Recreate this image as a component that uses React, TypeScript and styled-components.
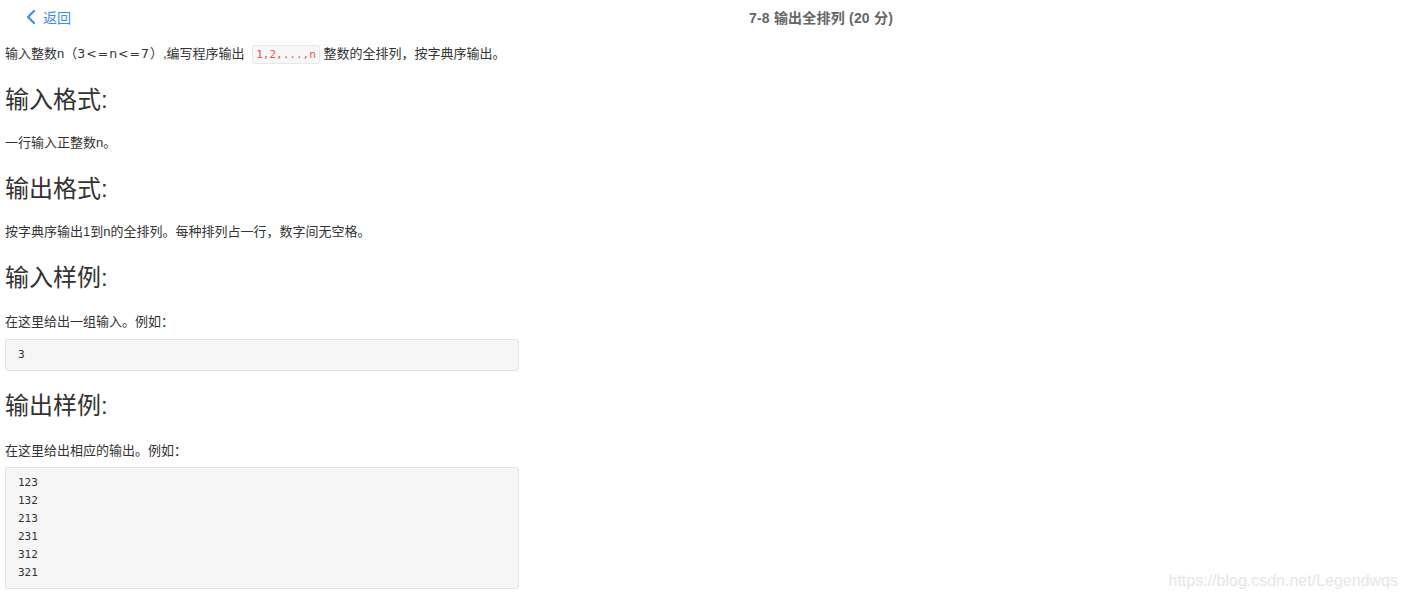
import React from "react";
import styled, { createGlobalStyle } from "styled-components";

const Global = createGlobalStyle`
  html, body { margin: 0; padding: 0; background: #fff; }
  body {
    font-family: "Liberation Sans", "Noto Sans CJK SC", sans-serif;
    font-size: 13px;
    color: #333;
  }
`;

const Page = styled.div`
  position: relative;
  width: 1408px;
  height: 600px;
  overflow: hidden;
`;

const Header = styled.header`
  display: flex;
  align-items: center;
  height: 34px;
`;

const BackLink = styled.a`
  display: flex;
  align-items: center;
  gap: 7px;
  padding-left: 26px;
  color: #3a8ee6;
  font-size: 14px;
  text-decoration: none;
  cursor: pointer;
`;

const Title = styled.h1`
  flex: 1;
  margin: 0;
  padding-left: 163px;
  text-align: center;
  font-size: 14px;
  font-weight: bold;
  letter-spacing: 0.2px;
  color: #666;
`;

const Content = styled.main`
  padding: 0 5px;
  width: 514px;
`;

const Para = styled.p<{ $mt?: number }>`
  margin: ${(p) => p.$mt ?? 0}px 0 0;
  line-height: 20px;
  white-space: nowrap;
`;

const MathText = styled.span`
  font-family: "DejaVu Sans", sans-serif;
  font-size: 12.5px;
  line-height: 1;
  letter-spacing: 1px;
`;

const Heading = styled.h2<{ $mt?: number }>`
  margin: ${(p) => p.$mt ?? 21}px 0 0;
  font-size: 24px;
  line-height: 30px;
  font-weight: normal;
  color: #333;
`;

const InlineCode = styled.code`
  font-family: "DejaVu Sans Mono", "Liberation Mono", monospace;
  font-size: 11px;
  line-height: 1;
  color: #e8554e;
  background: #f7f7f7;
  border: 1px solid #e8e8e8;
  border-radius: 3px;
  padding: 2px 3px;
  margin-left: 4px;
`;

const Pre = styled.pre<{ $mt?: number }>`
  margin: ${(p) => p.$mt ?? 7}px 0 0;
  padding: 6px 12px;
  background: #f6f6f6;
  border: 1px solid #e3e3e3;
  border-radius: 3px;
  font-family: "DejaVu Sans Mono", "Liberation Mono", monospace;
  font-size: 11px;
  line-height: 18px;
  color: #333;
`;

const Watermark = styled.div`
  position: absolute;
  right: 10px;
  bottom: 10px;
  font-family: "Liberation Sans", sans-serif;
  font-size: 16px;
  color: #e6e6e6;
`;

const Chevron = () => (
  <svg width="10" height="16" viewBox="0 0 10 16" fill="none">
    <path d="M8 2 L2 8 L8 14" stroke="#3a8ee6" strokeWidth="2.2" strokeLinecap="round" strokeLinejoin="round" />
  </svg>
);

export default function App() {
  return (
    <Page>
      <Global />
      <Header>
        <BackLink>
          <Chevron />
          返回
        </BackLink>
        <Title>7-8 输出全排列 (20 分)</Title>
      </Header>
      <Content>
        <Para $mt={10}>
          输入整数n（<MathText>3&lt;=n&lt;=7</MathText>）,编写程序输出 <InlineCode>1,2,...,n</InlineCode> 整数的全排列，按字典序输出。
        </Para>
        <Heading>输入格式:</Heading>
        <Para $mt={18}>一行输入正整数n。</Para>
        <Heading>输出格式:</Heading>
        <Para $mt={18}>按字典序输出1到n的全排列。每种排列占一行，数字间无空格。</Para>
        <Heading>输入样例:</Heading>
        <Para $mt={19}>在这里给出一组输入。例如：</Para>
        <Pre>3</Pre>
        <Heading $mt={20}>输出样例:</Heading>
        <Para $mt={20}>在这里给出相应的输出。例如：</Para>
        <Pre $mt={6}>{"123\n132\n213\n231\n312\n321"}</Pre>
      </Content>
      <Watermark>https://blog.csdn.net/Legendwqs</Watermark>
    </Page>
  );
}
